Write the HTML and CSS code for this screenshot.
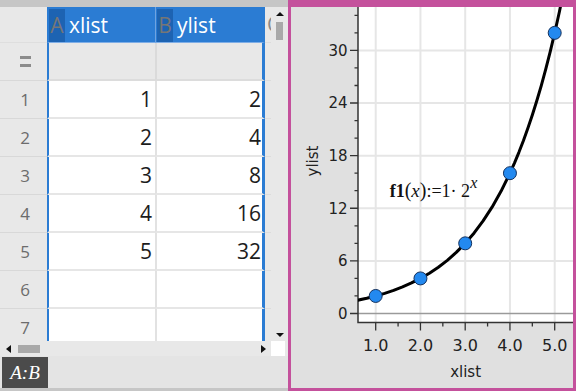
FILE: index.html
```html
<!DOCTYPE html>
<html>
<head>
<meta charset="utf-8">
<link rel="stylesheet" href="styles.css">
</head>
<body>
<div class="screen">
  <section class="sheet">
    <div class="sheet-body">
      <div class="table">
        <div class="row head">
          <div class="rh"></div>
          <div class="cell a"><span class="col-letter">A</span><span class="col-name">xlist</span></div>
          <div class="cell b"><span class="col-letter">B</span><span class="col-name">ylist</span></div>
          <div class="cell c"><span class="col-c">C</span></div>
        </div>
        <div class="row formula">
          <div class="rh"><span class="eq"></span></div>
          <div class="cell a"></div>
          <div class="cell b"></div>
          <div class="cell c"></div>
        </div>
        <div class="row data"><div class="rh">1</div><div class="cell a">1</div><div class="cell b">2</div><div class="cell c"></div></div>
        <div class="row data"><div class="rh">2</div><div class="cell a">2</div><div class="cell b">4</div><div class="cell c"></div></div>
        <div class="row data"><div class="rh">3</div><div class="cell a">3</div><div class="cell b">8</div><div class="cell c"></div></div>
        <div class="row data"><div class="rh">4</div><div class="cell a">4</div><div class="cell b">16</div><div class="cell c"></div></div>
        <div class="row data"><div class="rh">5</div><div class="cell a">5</div><div class="cell b">32</div><div class="cell c"></div></div>
        <div class="row data"><div class="rh">6</div><div class="cell a"></div><div class="cell b"></div><div class="cell c"></div></div>
        <div class="row data"><div class="rh">7</div><div class="cell a"></div><div class="cell b"></div><div class="cell c"></div></div>
      </div>
      <div class="vscroll">
        <span class="arrow-up"></span>
        <span class="vthumb"></span>
        <span class="spacer"></span>
        <span class="arrow-down"></span>
      </div>
    </div>
    <div class="hscroll">
      <div class="htrack">
        <span class="arrow-left"></span>
        <span class="hthumb"></span>
        <span class="spacer"></span>
        <span class="arrow-right"></span>
      </div>
      <div class="corner"></div>
    </div>
    <div class="sheet-foot"><div class="tab">A:B</div></div>
  </section>
  <section class="graph">
    <svg width="282" height="381" viewBox="0 0 282 381">
      <defs>
        <clipPath id="plotclip"><rect x="67" y="0" width="215" height="315.5"/></clipPath>
      </defs>
      <rect class="plot-bg" x="67" y="0" width="215" height="315.5"/>
      <path class="grid" d="M84.7 0V315 M129.45 0V315 M174.2 0V315 M218.95 0V315 M263.7 0V315 M67 253.88H282 M67 201.26H282 M67 148.64H282 M67 96.02H282 M67 43.4H282"/>
      <path class="zero" d="M67 306.5H282"/>
      <path class="ticks" d="M59 306.5H67 M63.5 288.96H67 M63.5 271.42H67 M59 253.88H67 M63.5 236.34H67 M63.5 218.8H67 M59 201.26H67 M63.5 183.72H67 M63.5 166.18H67 M59 148.64H67 M63.5 131.1H67 M63.5 113.56H67 M59 96.02H67 M63.5 78.48H67 M63.5 60.94H67 M59 43.4H67 M63.5 25.86H67 M63.5 8.32H67 M84.7 315V323.5 M107.08 315V319.5 M129.45 315V323.5 M151.83 315V319.5 M174.2 315V323.5 M196.58 315V319.5 M218.95 315V323.5 M241.33 315V319.5 M263.7 315V323.5"/>
      <path class="axis" d="M67 0V315.5H282"/>
      <g class="ylab">
        <text x="56.5" y="311.9">0</text>
        <text x="56.5" y="259.3">6</text>
        <text x="56.5" y="206.7">12</text>
        <text x="56.5" y="154">18</text>
        <text x="56.5" y="101.4">24</text>
        <text x="56.5" y="48.8">30</text>
      </g>
      <g class="xlab">
        <text x="84.7" y="343.7">1.0</text>
        <text x="129.45" y="343.7">2.0</text>
        <text x="174.2" y="343.7">3.0</text>
        <text x="218.95" y="343.7">4.0</text>
        <text x="263.7" y="343.7">5.0</text>
      </g>
      <text class="axis-title" x="174.6" y="369.7">xlist</text>
      <text class="axis-title" transform="translate(27 154) rotate(-90)">ylist</text>
      <g clip-path="url(#plotclip)">
        <polyline class="curve" points="66.8,293.2 75.75,291.23 84.7,288.96 93.65,286.35 102.6,283.36 111.55,279.91 120.5,275.96 129.45,271.42 138.4,266.2 147.35,260.21 156.3,253.33 165.25,245.42 174.2,236.34 183.15,225.9 192.1,213.92 201.05,200.16 210,184.35 218.95,166.18 223.43,156.11 227.9,145.32 232.38,133.75 236.85,121.35 241.33,108.06 245.8,93.82 250.28,78.55 254.75,62.18 259.23,44.65 263.7,25.86 268.18,5.72 270.4,-4.9"/>
      </g>
      <g class="pts">
        <circle cx="84.7" cy="288.96" r="6.5"/>
        <circle cx="129.45" cy="271.42" r="6.5"/>
        <circle cx="174.2" cy="236.34" r="6.5"/>
        <circle cx="218.95" cy="166.18" r="6.5"/>
        <circle cx="263.7" cy="25.86" r="6.5"/>
      </g>
      <text class="fn" x="98.7" y="189.5"><tspan class="fn-b">f1</tspan><tspan class="fn-p">(</tspan><tspan class="fn-i">x</tspan><tspan class="fn-p">)</tspan>:=1· 2<tspan class="fn-sup" dy="-8.5">x</tspan></text>
    </svg>
  </section>
</div>
</body>
</html>
```

FILE: styles.css
```css
* { box-sizing: border-box; margin: 0; padding: 0; }
html, body { width: 576px; height: 391px; overflow: hidden; }
body { font-family: "Open Sans", "Noto Sans", sans-serif; background: #c6c6c6; }

.screen { display: flex; width: 576px; height: 391px; }

.sheet {
  width: 288px; height: 391px;
  display: flex; flex-direction: column;
  background: #c6c6c6;
  padding-top: 7px; padding-bottom: 3px;
}
.sheet-body { display: flex; height: 334px; flex-shrink: 0; }
.table {
  width: 271px; height: 334px; overflow: hidden;
  display: flex; flex-direction: column;
  background: #e8e8e8;
}
.row { display: flex; flex-shrink: 0; height: 38px; }
.row.head { height: 36px; }

.rh {
  width: 47px; flex-shrink: 0;
  background: #e8e8e8;
  display: flex; align-items: center; justify-content: center;
  padding-left: 3px;
  color: #6c6c6c; font-size: 17px; line-height: 1;
  border-bottom: 1px solid #d8d8d8;
}
.head .rh { border-bottom-color: #dedede; }

.cell {
  display: flex; align-items: center; justify-content: flex-end;
  flex-shrink: 0;
  font-size: 21px; line-height: 1; color: #1c1c1c;
}
.a { width: 108px; border-left: 2px solid #2b7cd3; padding-right: 3px; }
.b { width: 110px; border-left: 2px solid #e2e2e2; border-right: 3px solid #2b7cd3; padding-right: 1px; }
.c { width: 6px; overflow: hidden; background: #e8e8e8; border-bottom: 1px solid #dcdcdc; }

.data .a, .data .b { background: #ffffff; border-bottom: 2px solid #e6e6e6; }
.formula .a, .formula .b { background: #e8e8e8; border-bottom: 2px solid #dcdcdc; }
.formula .b { border-left-color: #dadada; }

.head .a, .head .b {
  background: #2b7cd3;
  justify-content: flex-start; align-items: stretch;
  padding-top: 2px; padding-right: 0;
  border-bottom: 1px solid #7faee6;
}
.head .b { border-left: 1px solid #6fa3e0; padding-left: 1px; }
.col-letter {
  width: 16px; background: #1d63b2; color: #767676;
  font-size: 21px;
  display: flex; align-items: center; justify-content: center;
}
.col-name {
  color: #ffffff; font-size: 21px; margin-left: 4px;
  display: flex; align-items: center;
}
.head .c { align-items: center; justify-content: flex-start; }
.col-c { color: #8a8a8a; font-size: 21px; padding-left: 2px; }

.eq {
  width: 11px; height: 11px;
  border-top: 3px solid #8c8c8c; border-bottom: 3px solid #8c8c8c;
}

.vscroll {
  width: 17px; background: #e8e8e8;
  display: flex; flex-direction: column; align-items: center;
  padding: 5px 0 4px 0;
}
.spacer { flex: 1; }
.arrow-up {
  width: 0; height: 0;
  border-left: 4px solid transparent; border-right: 4px solid transparent;
  border-bottom: 4px solid #111;
}
.arrow-down {
  width: 0; height: 0;
  border-left: 4px solid transparent; border-right: 4px solid transparent;
  border-top: 4px solid #111;
}
.vthumb { width: 7px; height: 18px; margin-top: 6px; background: #a9a9a9; }

.hscroll { height: 15px; display: flex; background: #e8e8e8; flex-shrink: 0; }
.htrack {
  width: 271px; display: flex; align-items: center;
  padding-left: 6px; padding-right: 5px;
}
.arrow-left {
  width: 0; height: 0;
  border-top: 4px solid transparent; border-bottom: 4px solid transparent;
  border-right: 5px solid #111;
}
.arrow-right {
  width: 0; height: 0;
  border-top: 4px solid transparent; border-bottom: 4px solid transparent;
  border-left: 5px solid #111;
}
.hthumb { width: 22px; height: 8px; margin-left: 7px; background: #a9a9a9; }
.corner { width: 14px; background: #ffffff; }

.sheet-foot {
  height: 32px; flex-shrink: 0;
  background: #e4e4e4;
  padding: 1px 0 0 2px;
}
.tab {
  width: 46px; height: 31px;
  background: #4b4b4b; color: #ffffff;
  font-family: "Liberation Serif", serif; font-style: italic; font-size: 19px;
  display: flex; align-items: center; justify-content: center;
}

.graph {
  width: 288px; height: 391px;
  border-style: solid; border-color: #c4519c;
  border-width: 7px 3px 3px 3px;
  background: #e0e0e0;
}
.graph svg { display: block; }
.plot-bg { fill: #ffffff; }
.grid { stroke: #e6e6e6; stroke-width: 2; fill: none; }
.zero { stroke: #9a9a9a; stroke-width: 1.5; fill: none; }
.ticks { stroke: #333333; stroke-width: 1.3; fill: none; }
.axis { stroke: #333333; stroke-width: 1.5; fill: none; }
.ylab text { font-family: "DejaVu Sans", sans-serif; font-size: 15px; fill: #222; text-anchor: end; }
.xlab text { font-family: "DejaVu Sans", sans-serif; font-size: 16px; fill: #222; text-anchor: middle; }
.axis-title { font-family: "DejaVu Sans", sans-serif; font-size: 15px; fill: #222; text-anchor: middle; }
.curve { fill: none; stroke: #000; stroke-width: 3; stroke-linejoin: round; stroke-linecap: round; }
.pts circle { fill: #2389ef; stroke: #15325e; stroke-width: 1; }
.fn { font-family: "Liberation Serif", serif; font-size: 18px; fill: #111; }
.fn-b { font-weight: bold; }
.fn-p { font-size: 20px; }
.fn-i { font-style: italic; font-size: 19px; }
.fn-sup { font-style: italic; font-size: 16px; }
```
